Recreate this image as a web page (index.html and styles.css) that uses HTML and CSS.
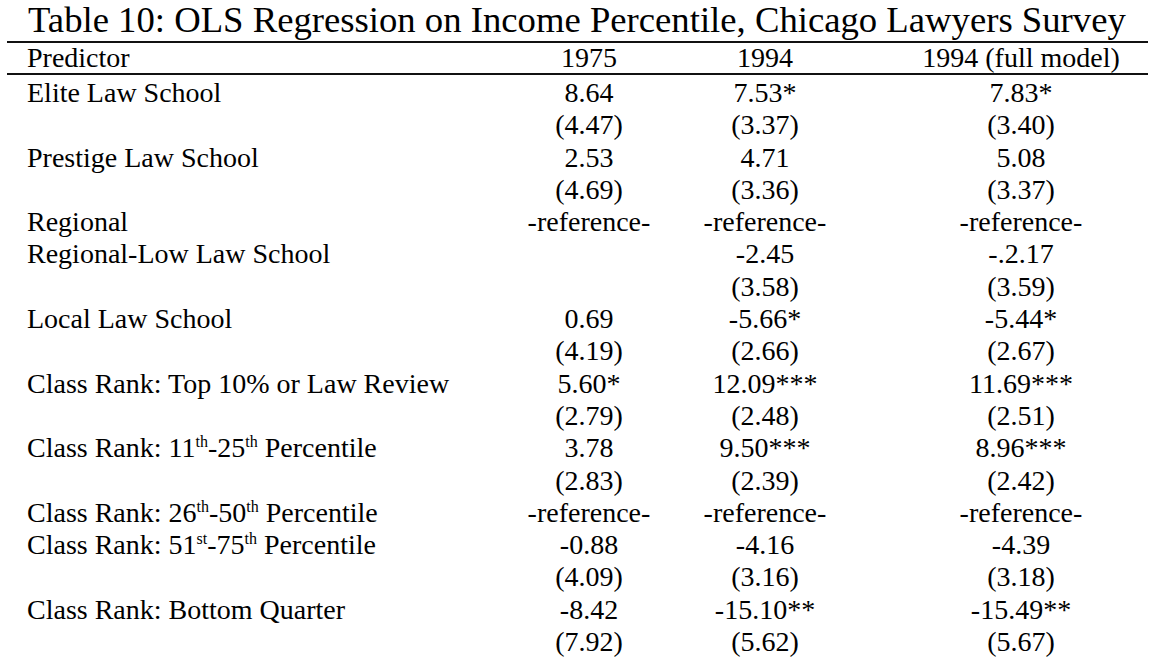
FILE: index.html
```html
<!DOCTYPE html>
<html>
<head>
<meta charset="utf-8">
<link rel="stylesheet" href="styles.css">
</head>
<body>
<div class="page">
  <div class="title">Table 10: OLS Regression on Income Percentile, Chicago Lawyers Survey</div>
  <table class="ols">
    <colgroup>
      <col class="c-pred"><col class="c-1975"><col class="c-1994"><col class="c-full">
    </colgroup>
    <thead>
      <tr><th class="pred">Predictor</th><th>1975</th><th>1994</th><th class="full">1994 (full model)</th></tr>
    </thead>
    <tbody>
      <tr class="first"><td class="pred">Elite Law School</td><td>8.64</td><td>7.53*</td><td class="full">7.83*</td></tr>
      <tr><td class="pred"></td><td>(4.47)</td><td>(3.37)</td><td class="full">(3.40)</td></tr>
      <tr><td class="pred">Prestige Law School</td><td>2.53</td><td>4.71</td><td class="full">5.08</td></tr>
      <tr><td class="pred"></td><td>(4.69)</td><td>(3.36)</td><td class="full">(3.37)</td></tr>
      <tr><td class="pred">Regional</td><td>-reference-</td><td>-reference-</td><td class="full">-reference-</td></tr>
      <tr><td class="pred">Regional-Low Law School</td><td></td><td>-2.45</td><td class="full">-.2.17</td></tr>
      <tr><td class="pred"></td><td></td><td>(3.58)</td><td class="full">(3.59)</td></tr>
      <tr><td class="pred">Local Law School</td><td>0.69</td><td>-5.66*</td><td class="full">-5.44*</td></tr>
      <tr><td class="pred"></td><td>(4.19)</td><td>(2.66)</td><td class="full">(2.67)</td></tr>
      <tr><td class="pred">Class Rank: Top 10% or Law Review</td><td>5.60*</td><td>12.09***</td><td class="full">11.69***</td></tr>
      <tr><td class="pred"></td><td>(2.79)</td><td>(2.48)</td><td class="full">(2.51)</td></tr>
      <tr><td class="pred">Class Rank: 11<sup>th</sup>-25<sup>th</sup> Percentile</td><td>3.78</td><td>9.50***</td><td class="full">8.96***</td></tr>
      <tr><td class="pred"></td><td>(2.83)</td><td>(2.39)</td><td class="full">(2.42)</td></tr>
      <tr><td class="pred">Class Rank: 26<sup>th</sup>-50<sup>th</sup> Percentile</td><td>-reference-</td><td>-reference-</td><td class="full">-reference-</td></tr>
      <tr><td class="pred">Class Rank: 51<sup>st</sup>-75<sup>th</sup> Percentile</td><td>-0.88</td><td>-4.16</td><td class="full">-4.39</td></tr>
      <tr><td class="pred"></td><td>(4.09)</td><td>(3.16)</td><td class="full">(3.18)</td></tr>
      <tr><td class="pred">Class Rank: Bottom Quarter</td><td>-8.42</td><td>-15.10**</td><td class="full">-15.49**</td></tr>
      <tr><td class="pred"></td><td>(7.92)</td><td>(5.62)</td><td class="full">(5.67)</td></tr>
    </tbody>
  </table>
</div>
</body>
</html>
```
FILE: styles.css
```css
html, body {
  margin: 0;
  padding: 0;
  background: #fff;
}
body {
  font-family: "Liberation Serif", "Times New Roman", serif;
  color: #000;
}
.page {
  padding-left: 7px;
  width: 1141px;
}
.title {
  font-size: 36.7px;
  line-height: 40px;
  padding-left: 21px;
  height: 41px;
  white-space: nowrap;
}
.ols {
  border-collapse: collapse;
  table-layout: fixed;
  width: 1141px;
  font-size: 28px;
}
.c-pred { width: 517px; }
.c-1975 { width: 130px; }
.c-1994 { width: 222px; }
.c-full { width: 272px; }
.ols th, .ols td {
  padding: 0;
  font-weight: normal;
  text-align: center;
  white-space: nowrap;
  vertical-align: top;
}
.ols thead tr {
  border-top: 2px solid #111;
  border-bottom: 2px solid #111;
}
.ols thead th {
  height: 30px;
  line-height: 30px;
}
.ols tbody td {
  height: 32.3px;
  line-height: 32.3px;
}
.ols tbody tr.first td {
  padding-top: 2px;
}
.ols .pred {
  text-align: left;
  padding-left: 20px;
}
.ols .full {
  padding-left: 18px;
}
.ols sup {
  font-size: 16px;
  line-height: 0;
  vertical-align: 10px;
}
```
